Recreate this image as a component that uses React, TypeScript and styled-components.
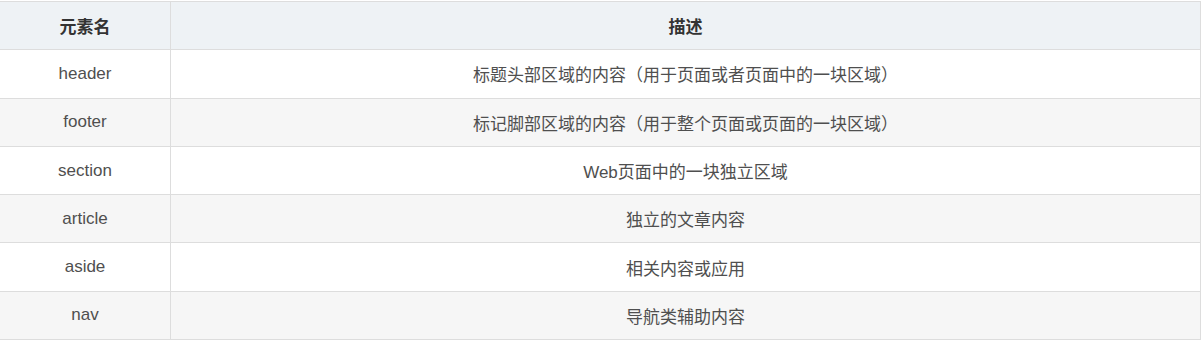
import styled, { createGlobalStyle } from "styled-components";

const GlobalStyle = createGlobalStyle`
    html, body {
        margin: 0;
        padding: 0;
        background: #ffffff;
    }
    body {
        font-family: "Liberation Sans", Arial, "Noto Sans CJK SC", sans-serif;
    }
`;

const Page = styled.div`
    padding-top: 1px;
    width: 1201px;
`;

const Table = styled.div`
    display: grid;
    grid-template-columns: 171px 1fr;
    width: 1201px;
    border-top: 1px solid #dddddd;
    border-right: 1px solid #dddddd;
    box-sizing: border-box;
`;

const Row = styled.div<{ $head?: boolean; $striped?: boolean }>`
    display: contents;
    & > div {
        background: ${(p) => (p.$head ? "#eef2f5" : p.$striped ? "#f6f6f6" : "#ffffff")};
        color: ${(p) => (p.$head ? "#333333" : "#4f4f4f")};
        font-weight: ${(p) => (p.$head ? 700 : 400)};
    }
`;

const Cell = styled.div<{ $first?: boolean }>`
    height: 47.3px;
    display: flex;
    align-items: center;
    justify-content: center;
    font-size: 17px;
    border-bottom: 1px solid #dddddd;
    border-right: ${(p) => (p.$first ? "1px solid #dddddd" : "none")};
    box-sizing: content-box;
    white-space: nowrap;
`;

const rows = [
    { name: "header", desc: "标题头部区域的内容（用于页面或者页面中的一块区域）" },
    { name: "footer", desc: "标记脚部区域的内容（用于整个页面或页面的一块区域）" },
    { name: "section", desc: "Web页面中的一块独立区域" },
    { name: "article", desc: "独立的文章内容" },
    { name: "aside", desc: "相关内容或应用" },
    { name: "nav", desc: "导航类辅助内容" },
];

const App = () => {
    return (
        <>
            <GlobalStyle />
            <Page>
                <Table>
                    <Row $head>
                        <Cell $first>元素名</Cell>
                        <Cell>描述</Cell>
                    </Row>
                    {rows.map((r, i) => (
                        <Row key={r.name} $striped={i % 2 === 1}>
                            <Cell $first>{r.name}</Cell>
                            <Cell>{r.desc}</Cell>
                        </Row>
                    ))}
                </Table>
            </Page>
        </>
    );
};

export default App;
